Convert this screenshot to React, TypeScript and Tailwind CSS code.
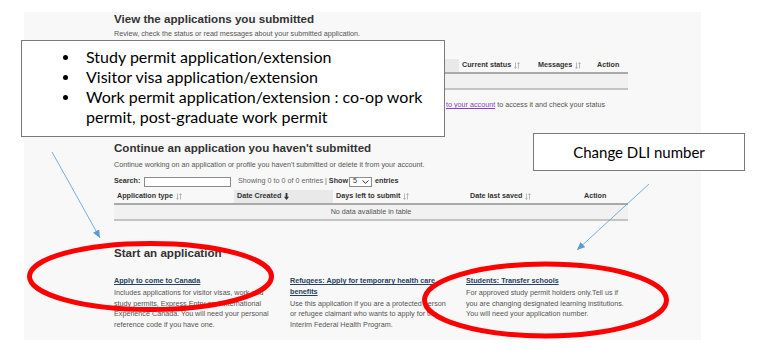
import React from "react";

const SortIcon = () => (
  <svg width="6" height="7" viewBox="0 0 6 7" className="ml-[3px] inline-block shrink-0">
    <path
      d="M1.5 0.4V6.4M0.4 5.1L1.5 6.4L2.6 5.1M4.5 6.6V0.6M3.4 1.9L4.5 0.6L5.6 1.9"
      stroke="#a8a8a8"
      strokeWidth="0.8"
      fill="none"
    />
  </svg>
);

const DownIcon = () => (
  <svg width="5" height="7" viewBox="0 0 5 7" className="ml-[3px] inline-block shrink-0">
    <path d="M1.6 0H3.4V3.8H5L2.5 7L0 3.8H1.6Z" fill="#333" />
  </svg>
);

function Th({ children, sort, down, gray }: { children?: React.ReactNode; sort?: boolean; down?: boolean; gray?: boolean }) {
  return (
    <div className={"flex items-center pl-[3px] " + (gray ? "bg-[#e9e9e9]" : "")}>
      {children && <span>{children}</span>}
      {sort && <SortIcon />}
      {down && <DownIcon />}
    </div>
  );
}

function Card({ title, body }: { title: string; body: string }) {
  return (
    <div>
      <a className="block text-[7.2px] leading-[10.5px] font-bold text-[#284162] underline">{title}</a>
      <p className="mt-[1.5px] text-[7.2px] leading-[10.5px] text-[#555]">{body}</p>
    </div>
  );
}

export default function App() {
  return (
    <div className="relative w-[768px] h-[355px] bg-white overflow-hidden font-['Liberation_Sans',Arial,sans-serif] text-[#333]">
      <div className="ml-[24px] mt-[12px] w-[677px] h-[328px] bg-[#f8f8f8] pl-[90px]">
        <div className="w-[514px]">
          {/* Section 1 */}
          <h2 className="text-[11.6px] leading-[14px] font-bold">View the applications you submitted</h2>
          <p className="mt-[3px] text-[7.2px] leading-[10px] text-[#555]">
            Review, check the status or read messages about your submitted application.
          </p>
          <div className="mt-[20px] grid grid-cols-[110px_120px_115px_76px_59px_34px] h-[15px] text-[7.2px] font-bold border-b-2 border-[#a9a9a9]">
            <Th />
            <Th />
            <Th gray />
            <Th sort>Current status</Th>
            <Th sort>Messages</Th>
            <Th>Action</Th>
          </div>
          <div className="h-[16px] bg-[#f1f1f1] border-b-2 border-[#c4c4c4]"></div>
          <p className="mt-[10px] pl-[332px] text-[7.2px] leading-[10px] text-[#555] whitespace-nowrap">
            <a className="text-[#8a3ec9] underline">to your account</a> to access it and check your status
          </p>

          {/* Section 2 */}
          <h2 className="mt-[31px] text-[11.6px] leading-[14px] font-bold">Continue an application you haven't submitted</h2>
          <p className="mt-[5px] text-[7.2px] leading-[10px] text-[#555]">
            Continue working on an application or profile you haven't submitted or delete it from your account.
          </p>
          <div className="mt-[6px] h-[11px] flex items-center text-[7.2px]">
            <span className="font-bold">Search:</span>
            <div className="ml-[3.5px] w-[87px] h-[10px] border border-[#8c8c8c] bg-white"></div>
            <span className="ml-[7px] text-[#666]">Showing 0 to 0 of 0 entries | </span>
            <span className="ml-[2px] font-bold">Show</span>
            <div className="ml-[1px] w-[23px] h-[10px] border border-[#8c8c8c] bg-white flex items-center justify-between pl-[3px] pr-[2px]">
              <span>5</span>
              <svg width="7" height="4" viewBox="0 0 7 4">
                <path d="M0.5 0.5L3.5 3.3L6.5 0.5" stroke="#333" strokeWidth="1" fill="none" />
              </svg>
            </div>
            <span className="ml-[3px] font-bold">entries</span>
          </div>
          <div className="mt-[3px] grid grid-cols-[120px_99px_134px_114px_47px] h-[15px] text-[7.2px] font-bold border-b-2 border-[#a9a9a9]">
            <Th sort>Application type</Th>
            <Th down gray>Date Created</Th>
            <Th sort>Days left to submit</Th>
            <Th sort>Date last saved</Th>
            <Th>Action</Th>
          </div>
          <div className="h-[16px] bg-[#f1f1f1] border-b-2 border-[#c4c4c4] flex items-center justify-center text-[7.2px] text-[#555]">
            No data available in table
          </div>

          {/* Section 3 */}
          <h2 className="mt-[25px] text-[11.6px] leading-[14px] font-bold">Start an application</h2>
          <div className="mt-[16px] grid grid-cols-[160px_160px_160px] gap-x-[16px]">
            <Card
              title="Apply to come to Canada"
              body="Includes applications for visitor visas, work and study permits, Express Entry and International Experience Canada. You will need your personal reference code if you have one."
            />
            <Card
              title="Refugees: Apply for temporary health care benefits"
              body="Use this application if you are a protected person or refugee claimant who wants to apply for the Interim Federal Health Program."
            />
            <Card
              title="Students: Transfer schools"
              body="For approved study permit holders only.Tell us if you are changing designated learning institutions. You will need your application number."
            />
          </div>
        </div>
      </div>

      {/* Red ellipses */}
      <svg className="absolute left-0 top-0 pointer-events-none" width="768" height="355" viewBox="0 0 768 355">
        <ellipse cx="150.5" cy="276.5" rx="121" ry="33" fill="none" stroke="#ff0000" strokeWidth="5" />
        <ellipse cx="545.5" cy="300" rx="121" ry="36" fill="none" stroke="#ff0000" strokeWidth="5" />
      </svg>

      {/* Annotation box 1 */}
      <div className="absolute left-[21px] top-[40px] w-[424px] h-[97px] bg-white border border-[#7a7a7a] pt-[6px] font-['Lato',sans-serif] text-[16px] leading-[20px] text-black">
        {[
          "Study permit application/extension",
          "Visitor visa application/extension",
          "Work permit application/extension : co-op work permit, post-graduate work permit",
        ].map((t) => (
          <div key={t} className="flex">
            <div className="w-[64px] shrink-0 flex justify-end pr-[18px] pt-[8px]">
              <div className="w-[5px] h-[5px] rounded-full bg-black"></div>
            </div>
            <div className="w-[350px]">{t}</div>
          </div>
        ))}
      </div>

      {/* Annotation box 2 */}
      <div className="absolute left-[533px] top-[133px] w-[212px] h-[38px] bg-white border border-[#7a7a7a] flex items-center justify-center font-['Lato',sans-serif] text-[15px] text-black">
        Change DLI number
      </div>

      {/* Arrows */}
      <svg className="absolute left-0 top-0 pointer-events-none" width="768" height="355" viewBox="0 0 768 355">
        <defs>
          <marker id="ah" markerWidth="8" markerHeight="7" refX="8" refY="3.5" orient="auto" markerUnits="userSpaceOnUse">
            <polygon points="0 0, 8 3.5, 0 7" fill="#5b9bd5" />
          </marker>
        </defs>
        <line x1="52" y1="152" x2="100" y2="238" stroke="#5b9bd5" strokeWidth="0.8" markerEnd="url(#ah)" />
        <line x1="649" y1="184" x2="577" y2="250" stroke="#5b9bd5" strokeWidth="0.8" markerEnd="url(#ah)" />
      </svg>
    </div>
  );
}
